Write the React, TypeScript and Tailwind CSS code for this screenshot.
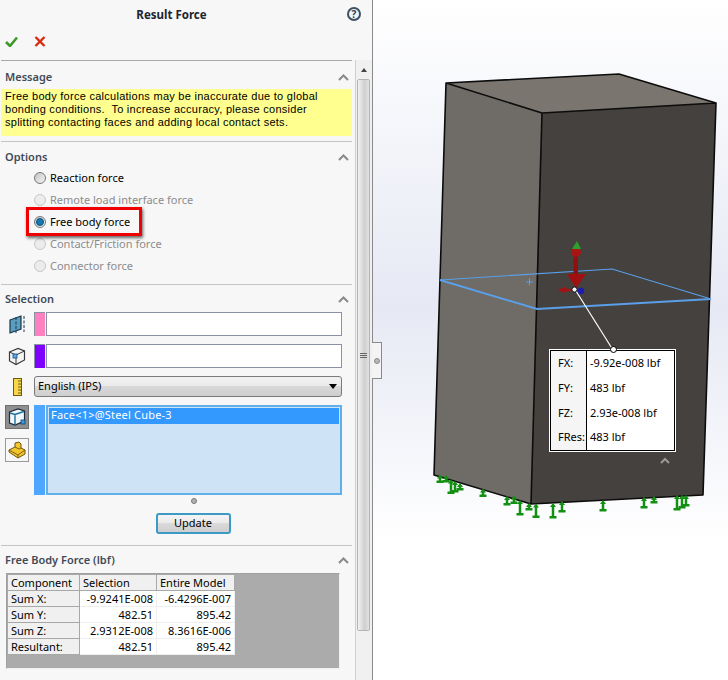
const font = "font-['Noto_Sans','Liberation_Sans',sans-serif]";

function Chevron() {
  return (
    <svg width="11" height="7" viewBox="0 0 11 7" className="shrink-0">
      <path d="M1 6 L5.5 1.5 L10 6" fill="none" stroke="#8a8a8a" strokeWidth="2" />
    </svg>
  );
}

function SectionHead({ title }: { title: string }) {
  return (
    <div className="flex items-center justify-between h-[15px] pl-[5px] pr-[3px] text-[11px] font-semibold text-[#3f4a57]">
      <span>{title}</span>
      <Chevron />
    </div>
  );
}

function Radio({ label, on, off }: { label: string; on?: boolean; off?: boolean }) {
  return (
    <div className={`flex items-center h-[22px] pl-[34px] gap-[4px] text-[11px] ${off ? 'text-[#8c8c8c]' : 'text-black'}`}>
      <span className={`w-[12px] h-[12px] rounded-full border flex items-center justify-center ${off ? 'border-[#c8c8c8] bg-[#ececec]' : 'border-[#777777] bg-[linear-gradient(135deg,#c4c4c4,#f6f6f6)]'}`}>
        {on && <span className="w-[8px] h-[8px] rounded-full bg-[#1779b4] border border-[#0b4f7d]" />}
      </span>
      <span>{label}</span>
    </div>
  );
}

function FieldRow({ color, icon }: { color: string; icon: React.ReactNode }) {
  return (
    <div className="flex items-center h-[24px]">
      <div className="w-[34px] flex justify-center">{icon}</div>
      <div className="w-[11px] h-[24px] mr-px border-t border-l border-[#8b93a3]" style={{ backgroundColor: color }} />
      <div className="w-[296px] h-[24px] bg-white border border-[#8b93a3]" />
    </div>
  );
}

const rows = [
  ['Sum X:', '-9.9241E-008', '-6.4296E-007'],
  ['Sum Y:', '482.51', '895.42'],
  ['Sum Z:', '2.9312E-008', '8.3616E-006'],
  ['Resultant:', '482.51', '895.42'],
];

const tip = [
  ['FX:', '-9.92e-008 lbf'],
  ['FY:', '483 lbf'],
  ['FZ:', '2.93e-008 lbf'],
  ['FRes:', '483 lbf'],
];

// green fixture arrows under the part: x, middle y, height
const fixtures = [
  [440, 479, 5], [446, 479, 4], [451, 487, 11], [455, 487, 8], [460, 487, 4], [483, 493, 5],
  [507, 501, 6], [514, 500, 5], [520, 508, 12], [529, 507, 4], [536, 511, 11], [553, 511, 12],
  [562, 507, 8], [603, 506, 8], [644, 503, 8], [654, 500, 4], [677, 503, 12], [682, 502, 10], [686, 501, 8],
];

export default function App() {
  return (
    <div className={`relative flex w-[728px] h-[680px] overflow-hidden bg-white ${font}`}>
      <div className="relative flex flex-col w-[373px] h-[680px] shrink-0 bg-[#f7f7f7] border-r border-[#8a8a8a]">
        <div className="relative flex items-center justify-center h-[30px] pr-[29px] text-[11.5px] font-bold text-[#1c2530]">
          Result Force
          <span className="absolute right-[11px] top-[7px] w-[14px] h-[14px] rounded-full border-2 border-[#3f4f5f] bg-[#eef4f8] flex items-center justify-center text-[10px] font-bold leading-none text-[#2f3f4f]">?</span>
        </div>
        <div className="flex items-center h-[30px] pb-[8px] pl-[5px] gap-[16px]">
          <svg width="13" height="11" viewBox="0 0 13 11">
            <path d="M1 6 L5 10 L12 1.5" fill="none" stroke="#3d9a2a" strokeWidth="2.6" />
          </svg>
          <svg width="12" height="11" viewBox="0 0 12 11">
            <path d="M1.5 1 L10.5 10 M10.5 1 L1.5 10" fill="none" stroke="#d92a10" strokeWidth="2.4" />
          </svg>
        </div>
        <div className="flex flex-1 min-h-0">
          <div className="w-[352px] flex flex-col">
            <div className="h-px bg-[#a8a8a8] ml-px" />
            <div className="h-[9px]" />
            <SectionHead title="Message" />
            <div className="mt-[4px] ml-px h-[47px] pl-[4px] pt-[1px] bg-[#ffff8f] font-['Liberation_Sans',sans-serif] tracking-[0.27px] text-[11px] leading-[13px] text-black">
              <div>Free body force calculations may be inaccurate due to global</div>
              <div>bonding conditions.&nbsp; To increase accuracy, please consider</div>
              <div>splitting contacting faces and adding local contact sets.</div>
            </div>
            <div className="h-px mt-[5px] ml-px bg-[#c4c4c4]" />
            <div className="h-[8px]" />
            <SectionHead title="Options" />
            <div className="h-[2px]" />
            <Radio label="Reaction force" />
            <Radio label="Remote load interface force" off />
            <Radio label="Free body force" on />
            <Radio label="Contact/Friction force" off />
            <Radio label="Connector force" off />
            <div className="h-px mt-[7px] ml-px bg-[#c4c4c4]" />
            <div className="h-[7px]" />
            <SectionHead title="Selection" />
            <div className="flex flex-col gap-[8px] mt-[5px]">
              <FieldRow
                color="#ff80c0"
                icon={
                  <svg width="18" height="19" viewBox="0 0 18 19">
                    <path d="M2 5 L13 1 V14 L2 18 Z" fill="#5b9dbd" stroke="#17384f" strokeWidth="1.2" />
                    <path d="M8 2 V18 M16 1 V17" fill="none" stroke="#17384f" strokeWidth="1" strokeDasharray="3 1.5" />
                  </svg>
                }
              />
              <FieldRow
                color="#8000ff"
                icon={
                  <svg width="18" height="19" viewBox="0 0 18 19">
                    <path d="M1.5 5 L10 1.5 L16.5 4 V13 L8 17.5 L1.5 14 Z" fill="#f4f4f4" stroke="#3a3a3a" strokeWidth="1.2" />
                    <path d="M1.5 5 L8 8 L16.5 4 M8 8 V17.5" fill="none" stroke="#3a3a3a" strokeWidth="1" />
                    <rect x="5" y="7" width="4" height="4" fill="#5aa9e6" stroke="#0f4f86" strokeWidth="0.8" />
                  </svg>
                }
              />
              <div className="flex items-center h-[21px]">
                <div className="w-[34px] flex justify-center">
                  <svg width="9" height="18" viewBox="0 0 9 18">
                    <rect x="0.5" y="0.5" width="8" height="17" fill="#f7d84a" stroke="#6d5a10" />
                    <path d="M5 3 H8 M5 6 H8 M5 9 H8 M5 12 H8 M5 15 H8" stroke="#6d5a10" strokeWidth="1" />
                  </svg>
                </div>
                <div className="relative flex items-center w-[308px] h-[21px] pl-[3px] rounded-[3px] border border-[#7a7a7a] bg-[linear-gradient(#f2f2f2_0%,#ebebeb_45%,#d8d8d8_50%,#cfcfcf_100%)] text-[11px] text-black">
                  English (IPS)
                  <span className="absolute right-[4px] top-[7px] w-0 h-0 border-x-[4px] border-x-transparent border-t-[5px] border-t-black" />
                </div>
              </div>
            </div>
            <div className="flex mt-[8px]">
              <div className="w-[34px] flex flex-col items-start pl-[5px] gap-[9px]">
                <div className="w-[24px] h-[24px] flex items-center justify-center bg-[#8f8f8f] border border-[#6f6f6f]">
                  <svg width="18" height="18" viewBox="0 0 18 18">
                    <path d="M1.5 4 L10 1 L16.5 3 V13 L7 17 L1.5 15 Z" fill="#f2f7fb" stroke="#1c2c3c" strokeWidth="1.2" />
                    <path d="M2 5 L7 6.5 L16 3.5 M7 6.5 V17" fill="none" stroke="#1c6f9f" strokeWidth="1.4" />
                    <rect x="13" y="12" width="4" height="4" fill="#39a0e0" stroke="#0a3f6f" strokeWidth="0.8" />
                  </svg>
                </div>
                <div className="w-[24px] h-[24px] flex items-center justify-center bg-[#f7f7f7] border border-[#9a9a9a]">
                  <svg width="18" height="18" viewBox="0 0 18 18">
                    <path d="M1 9 L7 6 V2 L11 1 L13 3 V7 L17 9 V13 L10 17 L1 11 Z" fill="#f3c62d" stroke="#6f5510" strokeWidth="1" />
                    <path d="M1 9 L10 14 L17 9 M10 14 V17 M7 6 L11 8 L13 7" fill="none" stroke="#6f5510" strokeWidth="0.9" />
                  </svg>
                </div>
              </div>
              <div className="w-[11px] h-[90px] mr-px bg-[#4fa6ff]" />
              <div className="w-[296px] h-[90px] bg-[#cfe3f7] border-2 border-[#62b0ea] p-px">
                <div className="h-[16px] pl-[2px] bg-[#3399ff] text-white text-[11px] tracking-[0.2px] leading-[14px]">Face&lt;1&gt;@Steel Cube-3</div>
              </div>
            </div>
            <div className="flex justify-center pl-[36px] mt-[2px] h-[8px] items-center">
              <span className="w-[6px] h-[6px] rounded-full bg-[#b0b0b0] border border-[#7a7a7a]" />
            </div>
            <div className="flex justify-center pl-[34px] mt-[8px]">
              <div className="w-[75px] h-[21px] flex items-center justify-center rounded-[3px] border-2 border-[#3c9ac4] bg-[linear-gradient(#f4f4f4_0%,#ebebeb_45%,#dadada_50%,#cfcfcf_100%)] text-[11px] text-black">Update</div>
            </div>
            <div className="h-px mt-[11px] ml-px bg-[#c4c4c4]" />
            <div className="h-[7px]" />
            <SectionHead title="Free Body Force (lbf)" />
            <div className="ml-[6px] mt-[5px] w-[334px] h-[96px] bg-[#ababab] border border-[#a0a0a0] border-b-[#f0f0f0] border-r-[#f0f0f0]">
              <table className="border-collapse border border-[#7f7f7f] text-[11px] leading-[15px] text-black">
                <tbody>
                  <tr className="h-[16px]">
                    <td className="w-[72px] pl-[3px] bg-[#f0f0f0] border border-[#a8a8a8]">Component</td>
                    <td className="w-[77px] pl-[3px] bg-[#f0f0f0] border border-[#a8a8a8]">Selection</td>
                    <td className="w-[78px] pl-[3px] bg-[#f0f0f0] border border-[#a8a8a8]">Entire Model</td>
                  </tr>
                  {rows.map(r => (
                    <tr key={r[0]} className="h-[16px]">
                      <td className="pl-[3px] bg-[#f0f0f0] border border-[#a8a8a8]">{r[0]}</td>
                      <td className="pr-[3px] text-right bg-white border border-[#eeeeee]">{r[1]}</td>
                      <td className="pr-[3px] text-right bg-white border border-[#eeeeee]">{r[2]}</td>
                    </tr>
                  ))}
                </tbody>
              </table>
            </div>
          </div>
          <div className="w-[17px] ml-[3px] flex flex-col border-l border-[#d0d0d0] bg-[#f0f0f0]">
            <div className="h-[19px] flex items-center justify-center">
              <span className="w-0 h-0 border-x-[3px] border-x-transparent border-b-[4px] border-b-[#444444]" />
            </div>
            <div className="flex items-center justify-center h-[552px] ml-px mr-[2px] rounded-[2px] border border-[#b4b4b4] bg-[linear-gradient(90deg,#f2f2f2,#cfcfd2_60%,#e2e2e4)]">
              <div className="flex flex-col gap-px">
                <span className="w-[7px] h-px bg-[#666666]" />
                <span className="w-[7px] h-px bg-[#666666]" />
                <span className="w-[7px] h-px bg-[#666666]" />
              </div>
            </div>
          </div>
        </div>
      </div>

      {/* red call-out around the active option */}
      <div className="absolute left-[26px] top-[207px] w-[116px] h-[29px] border-[3px] border-[#f00000] shadow-[1px_2px_3px_rgba(0,0,0,0.6)]" />

      <div className="relative flex-1 bg-[linear-gradient(180deg,#ffffff_0%,#e6e9f4_45%,#ffffff_80%)]">
        <svg width="355" height="680" viewBox="373 0 355 680" className="block">
          <polygon points="446,83 619,74 716,103 542,113" fill="#7a766f" />
          <polygon points="446,83 542,113 531,504 434,475" fill="#6f6b66" />
          <polygon points="542,113 716,103 703,495 531,504" fill="#45413e" />
          <path d="M446 83 L619 74 L716 103 L542 113 Z M446 83 L434 475 L531 504 L703 495 L716 103 M542 113 L531 504" fill="none" stroke="#0c0c0c" strokeWidth="1.6" strokeLinejoin="round" />
          <path d="M440 280 L612 269 L711 299" fill="none" stroke="#5a9fe8" strokeWidth="1.2" />
          <path d="M440 280 L537 309 L711 299" fill="none" stroke="#5a9fe8" strokeWidth="2" />
          <path d="M526 282 H533 M529.5 278.5 V285.5" stroke="#5aa0e6" strokeWidth="1" />
          {fixtures.map(([x, y, h]) => (
            <g key={`${x}-${y}`} fill="#129012">
              <rect x={x - 1.25} y={y - h / 2} width="2.5" height={h} />
              <rect x={x - 3.5} y={y + h / 2 - 1} width="7" height="2.5" />
              <polygon points={`${x},${y - h / 2 - 2} ${x - 3},${y - h / 2 + 2} ${x + 3},${y - h / 2 + 2}`} />
            </g>
          ))}
          <path d="M661 463 L665 459 L669 463" fill="none" stroke="#9a9a9a" strokeWidth="2" />
          <path d="M576 291 L613 350" stroke="#ffffff" strokeWidth="1.2" />
          <rect x="573.5" y="252" width="4.5" height="22" fill="#8f1010" />
          <circle cx="576" cy="252" r="5" fill="#a81515" />
          <polygon points="577,241 572,249 581,249" fill="#2ca02c" />
          <polygon points="567,274 586,274 576,288" fill="#a01010" />
          <path d="M563 290 H573" stroke="#a01414" strokeWidth="2" />
          <polygon points="558,290 564,287 570,290 564,293" fill="#a01414" />
          <circle cx="581" cy="291" r="3.2" fill="#1c1cb0" />
          <circle cx="574.5" cy="289.5" r="2.6" fill="#f4f4f4" stroke="#111111" />
        </svg>
      </div>

      {/* splitter tab */}
      <div className="absolute z-10 left-[372px] top-[342px] w-[10px] h-[37px] bg-[#f4f4f4] border border-l-0 border-[#8a8a8a] flex items-center justify-center">
        <span className="w-[6px] h-[6px] rounded-full bg-[#b8b8b8] border border-[#888888]" />
      </div>

      {/* force tooltip over the model */}
      <div className="absolute left-[549px] top-[349px] w-[127px] h-[103px] border border-white bg-black p-px text-[11px] text-black">
        <div className="grid grid-cols-[35px_1fr] h-full gap-x-px">
          <div className="flex flex-col justify-around pl-[7px] bg-[#f5f5f5]">
            {tip.map(t => <span key={t[0]}>{t[0]}</span>)}
          </div>
          <div className="flex flex-col justify-around pl-[3px] bg-white">
            {tip.map(t => <span key={t[0]}>{t[1]}</span>)}
          </div>
        </div>
        <span className="absolute left-[60px] top-[-4px] w-[7px] h-[7px] rounded-full bg-white border border-black" />
      </div>
    </div>
  );
}
